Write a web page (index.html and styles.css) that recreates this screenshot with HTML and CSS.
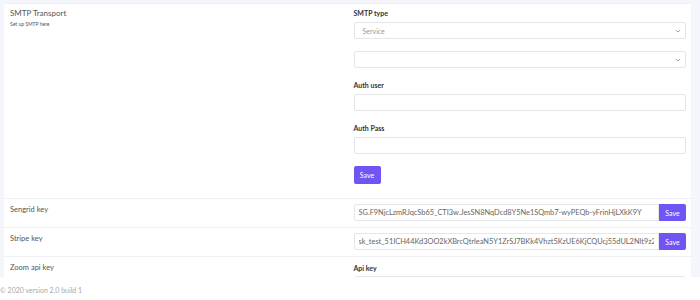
FILE: index.html
```html
<!DOCTYPE html>
<html>
<head>
<meta charset="utf-8">
<link rel="stylesheet" href="styles.css">
</head>
<body>
<div class="page">
  <div class="card">
    <div class="row smtp">
      <div class="col">
        <div class="title">SMTP Transport</div>
        <div class="sub">Set up SMTP here</div>
      </div>
      <div class="col">
        <div class="group">
          <div class="label">SMTP type</div>
          <div class="select"><span class="placeholder">Service</span><svg class="chev" width="6" height="4" viewBox="0 0 6 4"><path d="M0.8 1 L3 3 L5.2 1" fill="none" stroke="#888" stroke-width="0.8"/></svg></div>
        </div>
        <div class="group">
          <div class="select"><span class="placeholder"></span><svg class="chev" width="6" height="4" viewBox="0 0 6 4"><path d="M0.8 1 L3 3 L5.2 1" fill="none" stroke="#888" stroke-width="0.8"/></svg></div>
        </div>
        <div class="group">
          <div class="label">Auth user</div>
          <div class="input"></div>
        </div>
        <div class="group">
          <div class="label">Auth Pass</div>
          <div class="input"></div>
        </div>
        <button class="btn">Save</button>
      </div>
    </div>
    <div class="row key">
      <div class="col"><div class="klabel">Sengrid key</div></div>
      <div class="col">
        <div class="igroup">
          <div class="input val"><span class="txt">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</span></div>
          <button class="btn ibtn">Save</button>
        </div>
      </div>
    </div>
    <div class="row key">
      <div class="col"><div class="klabel">Stripe key</div></div>
      <div class="col">
        <div class="igroup">
          <div class="input val"><span class="txt">sk_test_51ICH44Kd3OO2kXBrcQtrleaN5Y1ZrSJ7BKk4Vhzt5KzUE6KjCQUcj55dUL2Nlt9z2u</span></div>
          <button class="btn ibtn">Save</button>
        </div>
      </div>
    </div>
    <div class="row zoom">
      <div class="col"><div class="klabel">Zoom api key</div></div>
      <div class="col">
        <div class="label">Api key</div>
        <div class="input"></div>
      </div>
    </div>
  </div>
</div>
<footer class="foot">© 2020 version 2.0 build 1</footer>
</body>
</html>
```
FILE: styles.css
```css
* { box-sizing: border-box; }
html, body { margin: 0; padding: 0; background: #fff; }
body { font-family: Lato, "Open Sans", sans-serif; color: #555; }
.page {
  height: 277px;
  overflow: hidden;
  background: #f4f6fb;
  padding: 3px 9px 0 4px;
}
.card {
  background: #fff;
  border-top: 1px solid #eef0f3;
  height: 100%;
}
.row {
  display: flex;
  border-bottom: 1px solid #eef0f3;
}
.col { flex: 1 1 0; padding: 0 5px 0 6px; min-width: 0; }
.smtp { padding: 4px 0 14px; }
.title { font-size: 8px; line-height: 10px; color: #555; }
.sub { font-size: 5px; line-height: 7px; color: #555; margin-top: 3px; }
.group { margin-bottom: 12px; }
.label { font-size: 7px; line-height: 10px; font-weight: 700; color: #333; margin-bottom: 4px; }
.select, .input {
  height: 17px;
  border: 1px solid #e3e6eb;
  border-radius: 2px;
  background: #fff;
  display: flex;
  align-items: center;
  padding: 0 4px 0 8px;
  font-size: 7px;
  color: #999;
}
.select { justify-content: space-between; }
.placeholder { color: #999; }
.chev { flex: none; }
.btn {
  display: block;
  width: 27px;
  height: 18px;
  border: none;
  border-radius: 2px;
  background: #7054f4;
  color: #fff;
  font-family: Lato, sans-serif;
  font-size: 7px;
  padding: 0;
}
.key { padding: 5px 0 6px; }
.klabel { font-size: 7.5px; line-height: 10px; color: #555; margin-top: 1px; }
.igroup { display: flex; }
.val {
  flex: 1 1 auto;
  min-width: 0;
  overflow: hidden;
  white-space: nowrap;
  color: #666;
  font-size: 7.4px;
  padding-left: 4px;
  border-radius: 2px 0 0 2px;
}
.txt { display: block; overflow: hidden; }
.ibtn { flex: none; height: 17px; border-radius: 0 2px 2px 0; }
.zoom { padding: 6px 0 0; border-bottom: none; }
.zoom .klabel { margin-top: 0; }
.zoom .label { margin-bottom: 3px; }
.foot {
  font-size: 7px;
  line-height: 10px;
  color: #aaa;
  padding: 8px 0 0 0;
}
```
